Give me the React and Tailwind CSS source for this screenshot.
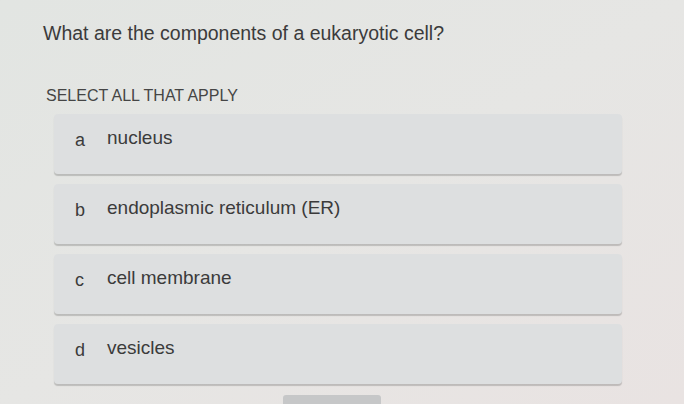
import React from 'react';

const options = [
  { key: 'a', label: 'nucleus' },
  { key: 'b', label: 'endoplasmic reticulum (ER)' },
  { key: 'c', label: 'cell membrane' },
  { key: 'd', label: 'vesicles' },
];

export default function App() {
  return (
    <div className="w-[684px] h-[404px] overflow-hidden bg-gradient-to-br from-[#e2e5e2] via-[#e6e6e4] to-[#e9e3e2] font-['Liberation_Sans',Arial,sans-serif] text-[#3b3b3b]">
      <div className="pl-[43px] pt-[21px]">
        <h1 className="text-[19.5px] leading-[24px]">What are the components of a eukaryotic cell?</h1>
        <p className="mt-[41px] ml-[3px] text-[16px] leading-[20px] uppercase text-[#454545]">Select all that apply</p>
      </div>

      <div className="ml-[54px] mr-[62px] mt-[8px] flex flex-col gap-[10px]">
        {options.map((opt) => (
          <div
            key={opt.key}
            className="h-[60px] rounded-[4px] bg-[#dddfe0] shadow-[0_2px_1px_rgba(0,0,0,0.18)] flex items-start pt-[12px] pl-[21px]"
          >
            <span className="w-[32px] text-[18px] leading-[24px] pt-[2px]">{opt.key}</span>
            <span className="text-[19px] leading-[24px]">{opt.label}</span>
          </div>
        ))}
      </div>

      <div className="mt-[11px] ml-[283px] w-[98px] h-[20px] rounded-[3px] bg-[#c6c7c8]" />
    </div>
  );
}
